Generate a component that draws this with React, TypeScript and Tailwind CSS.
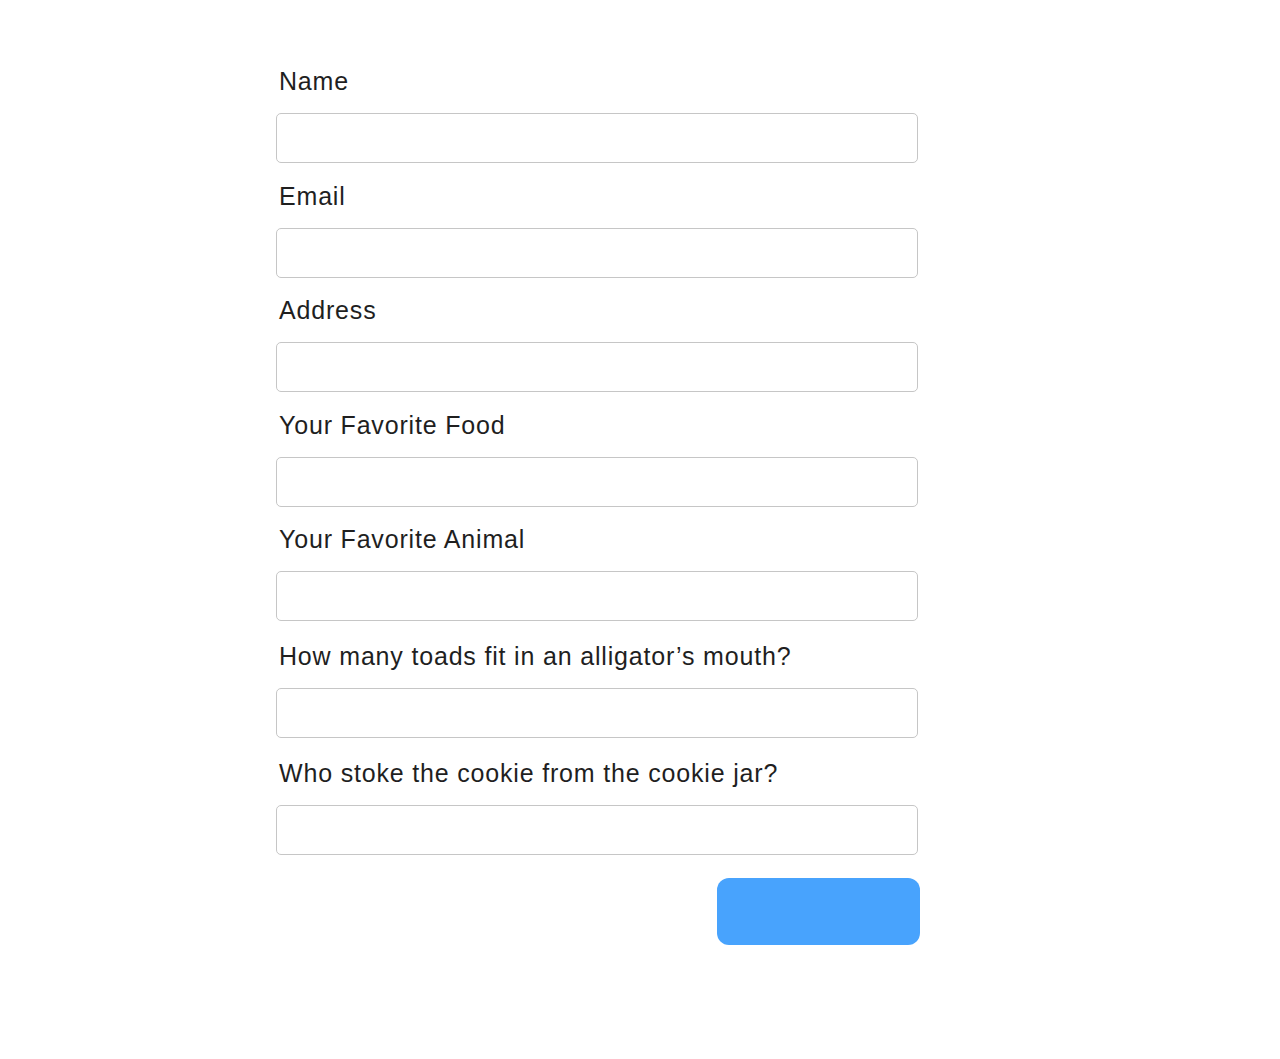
import { useState } from "react";

type Field = { key: string; label: string; spaced?: boolean };

const FIELDS: Field[] = [
  { key: "name", label: "Name" },
  { key: "email", label: "Email" },
  { key: "address", label: "Address" },
  { key: "food", label: "Your Favorite Food" },
  { key: "animal", label: "Your Favorite Animal" },
  { key: "toads", label: "How many toads fit in an alligator\u2019s mouth?", spaced: true },
  { key: "cookie", label: "Who stoke the cookie from the cookie jar?", spaced: true },
];

export default function App() {
  const [values, setValues] = useState<Record<string, string>>({});

  return (
    <div className="min-h-[1059px] bg-white font-['Liberation_Sans',Arial,sans-serif] text-[#1f1f1f]">
      <form className="ml-[276px] w-[644px] pt-[67px]" onSubmit={(e) => e.preventDefault()}>
        {FIELDS.map((f, i) => (
          <div key={f.key} className={i === 0 ? "" : f.spaced ? "mt-[21px]" : "mt-[18.5px]"}>
            <label htmlFor={f.key} className="block pl-[3px] text-[25px] leading-[28px] tracking-[0.82px]">
              {f.label}
            </label>
            <input
              id={f.key}
              value={values[f.key] ?? ""}
              onChange={(e) => setValues((v) => ({ ...v, [f.key]: e.target.value }))}
              className="mt-[18px] block h-[50px] w-[642px] rounded-[5px] border-[1.5px] border-[#c6c6c6] bg-white px-3 text-[20px] outline-none"
            />
          </div>
        ))}
        <div className="mt-[22.5px] flex justify-end">
          <button type="submit" className="h-[67px] w-[203px] rounded-[12px] bg-[#48a3fd]"></button>
        </div>
      </form>
    </div>
  );
}
